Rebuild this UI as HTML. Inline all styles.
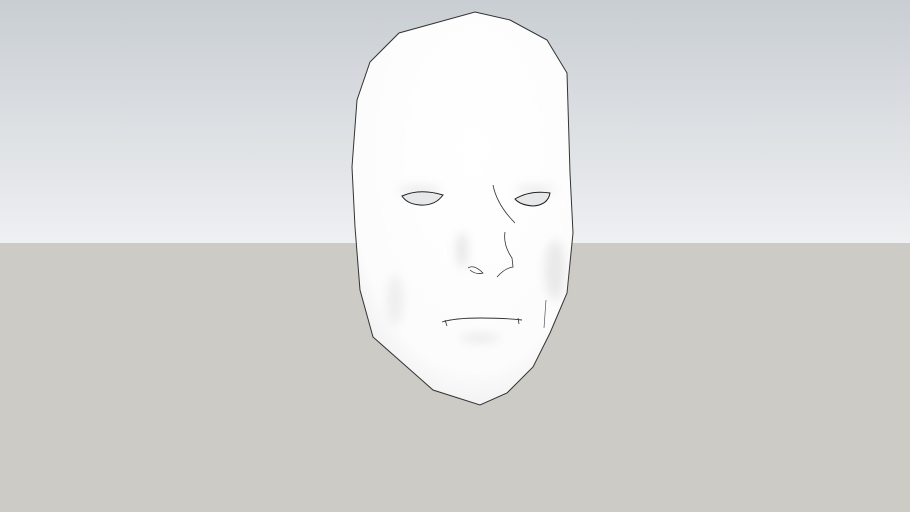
<!DOCTYPE html>
<html><head><style>
html,body{margin:0;padding:0;width:910px;height:512px;overflow:hidden}
</style></head><body>
<svg width="910" height="512" viewBox="0 0 910 512" xmlns="http://www.w3.org/2000/svg">
<defs>
<linearGradient id="sky" x1="0" y1="0" x2="0" y2="1">
<stop offset="0" stop-color="#c9ced3"/><stop offset="1" stop-color="#eef0f2"/>
</linearGradient>
<radialGradient id="face" cx="0.55" cy="0.35" r="0.75">
<stop offset="0" stop-color="#ffffff"/><stop offset="0.75" stop-color="#fcfcfc"/><stop offset="1" stop-color="#e8e8e8"/>
</radialGradient>
<filter id="bl"><feGaussianBlur stdDeviation="5"/></filter>
</defs>
<rect width="910" height="243" fill="url(#sky)"/>
<rect y="243" width="910" height="269" fill="#cccbc6"/>
<path d="M475,12 L510,20 L547,40 L567,73 L570,173 L573,233 L567,293 L550,333 L533,367 L507,393 L480,405 L433,390 L407,367 L373,337 L360,290 L355,227 L352,167 L357,100 L370,62 L399,33 Z" fill="url(#face)" stroke="#333" stroke-width="1"/>
<g filter="url(#bl)" opacity="0.3">
<ellipse cx="462" cy="250" rx="5" ry="18" fill="#aaa"/>
<ellipse cx="395" cy="300" rx="8" ry="25" fill="#ccc"/>
<ellipse cx="555" cy="270" rx="10" ry="30" fill="#bbb"/>
<ellipse cx="480" cy="338" rx="20" ry="4" fill="#bbb"/>
<ellipse cx="420" cy="190" rx="22" ry="4" fill="#bbb"/>
<ellipse cx="535" cy="190" rx="20" ry="4" fill="#bbb"/>
</g>
<path d="M402,196 Q420,188 443,195 Q435,206 420,205 Q407,204 402,196 Z" fill="#e6e8ea" stroke="#222" stroke-width="1"/>
<path d="M515,199 Q530,190 550,193 Q548,205 533,206 Q520,205 515,199 Z" fill="#e6e8ea" stroke="#222" stroke-width="1"/>
<path d="M493,185 Q497,205 515,223" fill="none" stroke="#333" stroke-width="0.8"/>
<path d="M505,232 Q503,245 512,258 L513,267 Q505,268 497,277" fill="none" stroke="#333" stroke-width="0.8"/>
<path d="M468,268 Q474,264 483,273 Q476,275 470,270" fill="none" stroke="#333" stroke-width="0.8"/>
<path d="M442,322 Q455,318 480,318 Q505,318 522,320" fill="none" stroke="#333" stroke-width="0.9"/>
<path d="M445,320 L447,326 M518,318 L519,324" stroke="#333" stroke-width="0.8"/>
<path d="M546,300 L544,328" stroke="#555" stroke-width="0.7"/>
</svg>
</body></html>
